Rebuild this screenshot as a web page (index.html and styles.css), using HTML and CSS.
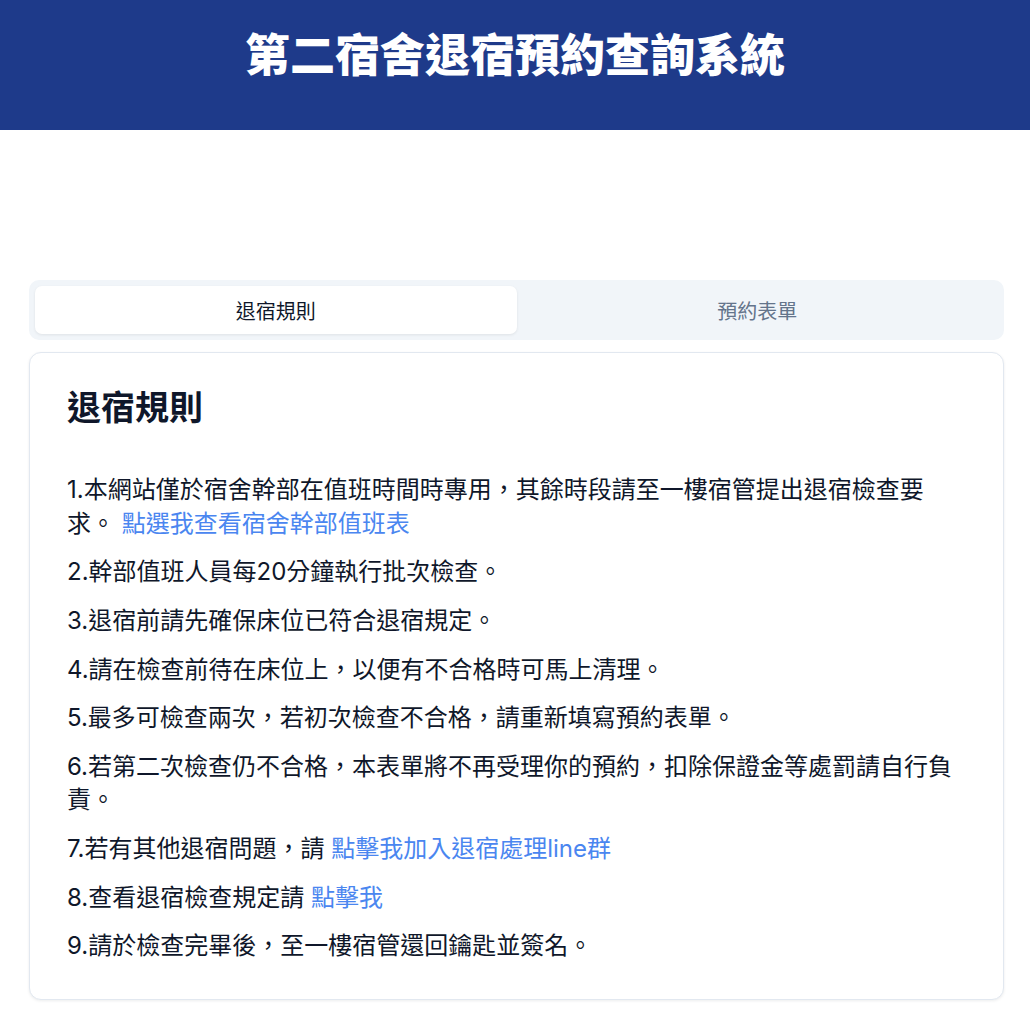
FILE: index.html
```html
<!DOCTYPE html>
<html lang="zh-TW">
<head>
    <meta charset="UTF-8">
    <meta name="viewport" content="width=device-width, initial-scale=1.0">
    <title>第二宿舍退宿預約查詢系統</title>
    <link rel="stylesheet" href="styles.css">
</head>
<body>
    <header class="site-header">
        <h1>第二宿舍退宿預約查詢系統</h1>
    </header>

    <main class="container">
        <div class="tabs">
            <button class="tab active">退宿規則</button>
            <button class="tab">預約表單</button>
        </div>

        <section class="card">
            <h2>退宿規則</h2>
            <ul class="rules">
                <li>1.本網站僅於宿舍幹部在值班時間時專用，其餘時段請至一樓宿管提出退宿檢查要求。 <a href="#">點選我查看宿舍幹部值班表</a></li>
                <li>2.幹部值班人員每20分鐘執行批次檢查。</li>
                <li>3.退宿前請先確保床位已符合退宿規定。</li>
                <li>4.請在檢查前待在床位上，以便有不合格時可馬上清理。</li>
                <li>5.最多可檢查兩次，若初次檢查不合格，請重新填寫預約表單。</li>
                <li>6.若第二次檢查仍不合格，本表單將不再受理你的預約，扣除保證金等處罰請自行負責。</li>
                <li>7.若有其他退宿問題，請 <a href="#">點擊我加入退宿處理line群</a></li>
                <li>8.查看退宿檢查規定請 <a href="#">點擊我</a></li>
                <li>9.請於檢查完畢後，至一樓宿管還回鑰匙並簽名。</li>
            </ul>
        </section>
    </main>
</body>
</html>
```

FILE: styles.css
```css
body {
    margin: 0;
    font-family: Inter, "Noto Sans CJK TC", sans-serif;
    color: #0f172a;
    background: #fff;
}
.site-header {
    background: #1e3a8a;
    height: 130px;
    padding-top: 29px;
    box-sizing: border-box;
    text-align: center;
}
.site-header h1 {
    margin: 0;
    color: #fff;
    font-size: 45px;
    font-weight: 900;
    line-height: 1.2;
}
.container {
    padding: 150px 26px 24px 29px;
}
.tabs {
    display: flex;
    background: #f1f5f9;
    border-radius: 10px;
    padding: 6px;
    height: 60px;
    box-sizing: border-box;
}
.tab {
    flex: 1;
    border: none;
    background: transparent;
    border-radius: 7px;
    font-family: inherit;
    font-size: 20px;
    font-weight: 400;
    color: #64748b;
    cursor: pointer;
}
.tab.active {
    background: #fff;
    color: #0f172a;
    box-shadow: 0 1px 3px rgba(0,0,0,0.08);
}
.card {
    margin-top: 12px;
    background: #fff;
    border: 1px solid #e2e8f0;
    border-radius: 12px;
    box-shadow: 0 1px 3px rgba(15,23,42,0.08);
    padding: 33px 37px 36px;
}
.card h2 {
    margin: 0 0 43px;
    font-size: 34px;
    font-weight: 700;
    line-height: 1.3;
}
.rules {
    list-style: none;
    margin: 0;
    padding: 0;
}
.rules li {
    font-size: 24px;
    line-height: 1.4;
    margin-bottom: 15px;
}
.rules li:last-child {
    margin-bottom: 0;
}
.rules a {
    color: #4a86f0;
    text-decoration: none;
}
```
